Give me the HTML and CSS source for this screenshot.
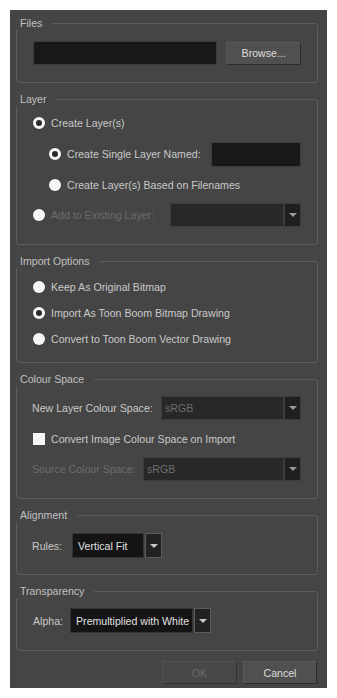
FILE: index.html
```html
<!DOCTYPE html>
<html>
<head>
<meta charset="utf-8">
<link rel="stylesheet" href="styles.css">
</head>
<body>
<div class="dialog">
  <div class="group g-files">
    <span class="gtitle">Files</span>
    <div class="row">
      <div class="field f-path"></div>
      <div class="btn b-browse">Browse...</div>
    </div>
  </div>

  <div class="group g-layer">
    <span class="gtitle">Layer</span>
    <div class="opt r1"><span class="radio on"></span><span>Create Layer(s)</span></div>
    <div class="opt r2 sub"><span class="radio on"></span><span>Create Single Layer Named:</span><div class="field f-name"></div></div>
    <div class="opt r3 sub"><span class="radio"></span><span>Create Layer(s) Based on Filenames</span></div>
    <div class="opt r4"><span class="radio"></span><span class="dis">Add to Existing Layer:</span>
      <div class="combo dcombo c-exist"><span class="ctext"></span><span class="cbtn"><i class="arrow"></i></span></div>
    </div>
  </div>

  <div class="group g-import">
    <span class="gtitle">Import Options</span>
    <div class="opt"><span class="radio"></span><span>Keep As Original Bitmap</span></div>
    <div class="opt"><span class="radio on"></span><span>Import As Toon Boom Bitmap Drawing</span></div>
    <div class="opt"><span class="radio"></span><span>Convert to Toon Boom Vector Drawing</span></div>
  </div>

  <div class="group g-colour">
    <span class="gtitle">Colour Space</span>
    <div class="opt c1"><span class="lbl">New Layer Colour Space:</span>
      <div class="combo dcombo c-new"><span class="ctext">sRGB</span><span class="cbtn"><i class="arrow"></i></span></div>
    </div>
    <div class="opt c2"><span class="check"></span><span>Convert Image Colour Space on Import</span></div>
    <div class="opt c3"><span class="lbl dis">Source Colour Space:</span>
      <div class="combo dcombo c-src"><span class="ctext">sRGB</span><span class="cbtn"><i class="arrow"></i></span></div>
    </div>
  </div>

  <div class="group g-align">
    <span class="gtitle">Alignment</span>
    <div class="opt"><span class="lbl">Rules:</span>
      <div class="combo ecombo c-rules"><span class="ctext">Vertical Fit</span><span class="cbtn"><i class="arrow"></i></span></div>
    </div>
  </div>

  <div class="group g-trans">
    <span class="gtitle">Transparency</span>
    <div class="opt"><span class="lbl">Alpha:</span>
      <div class="combo ecombo c-alpha"><span class="ctext">Premultiplied with White</span><span class="cbtn"><i class="arrow"></i></span></div>
    </div>
  </div>

  <div class="actions">
    <div class="btn b-ok disabled">OK</div>
    <div class="btn b-cancel">Cancel</div>
  </div>
</div>
</body>
</html>
```

FILE: styles.css
```css
html, body {
  margin: 0;
  padding: 0;
  background: #ffffff;
}
body {
  font-family: "Liberation Sans", Arial, sans-serif;
  font-size: 10.6px;
  color: #c9c9c9;
}
.dialog {
  margin: 10px 0 0 10px;
  width: 317px;
  height: 678px;
  box-sizing: border-box;
  background: #454545;
  padding: 13px 9px 0 6px;
  display: flex;
  flex-direction: column;
}
.group {
  position: relative;
  border: 1px solid #5c5c5c;
  border-radius: 3px;
  padding: 0 16px;
  display: flex;
  flex-direction: column;
  margin-bottom: 16px;
  flex: none;
}
.gtitle {
  position: absolute;
  left: -1px;
  top: -8px;
  height: 14px;
  line-height: 14px;
  padding: 0 10px 0 4px;
  background: #454545;
  color: #c0c0c0;
}
.row {
  display: flex;
  align-items: center;
}
.g-files { padding-top: 17px; padding-bottom: 17px; }
.f-path { width: 185px; height: 24px; }
.b-browse { margin-left: 9px; width: 75px; height: 23px; }

.field {
  box-sizing: border-box;
  background: #181818;
  border: 1px solid #3c3c3c;
}
.btn {
  box-sizing: border-box;
  background: #505050;
  border: 1px solid #2c2c2c;
  border-top-color: #5a5a5a;
  border-left-color: #5a5a5a;
  color: #dedede;
  display: flex;
  align-items: center;
  justify-content: center;
}
.btn.disabled {
  background: #484848;
  color: #6c6c6c;
  border-color: #333333;
  border-top-color: #525252;
  border-left-color: #525252;
}

.opt {
  display: flex;
  align-items: center;
  height: 20px;
  flex: none;
}
.opt > span:not(.radio):not(.check):not(.lbl) { white-space: nowrap; }
.radio {
  width: 12px;
  height: 12px;
  border-radius: 50%;
  background: #f6f6f6;
  margin-right: 6px;
  flex: none;
  box-sizing: border-box;
}
.radio.on {
  border: 3px solid #f6f6f6;
  background: #2a2a2a;
}
.check {
  width: 12px;
  height: 12px;
  background: #f6f6f6;
  margin-right: 6px;
  flex: none;
}
.dis { color: #6c6c6c; }
.lbl { white-space: nowrap; }
.sub { margin-left: 16px; }

.g-layer { padding-top: 13px; padding-bottom: 17px; }
.g-layer .r2 { margin-top: 9px; height: 24px; }
.g-layer .r3 { margin-top: 9px; }
.g-layer .r4 { margin-top: 8px; height: 24px; }
.f-name { margin-left: auto; width: 90px; height: 25px; }

.combo {
  box-sizing: border-box;
  height: 24px;
  display: flex;
  margin-left: auto;
}
.ctext {
  flex: 1;
  display: flex;
  align-items: center;
  white-space: nowrap;
}
.cbtn {
  width: 15px;
  display: flex;
  align-items: center;
  justify-content: center;
}
.arrow {
  width: 0;
  height: 0;
  border-left: 4px solid transparent;
  border-right: 4px solid transparent;
  border-top: 4px solid #9a9a9a;
}
.dcombo {
  background: #282828;
  border: 1px solid #3c3c3c;
  color: #6e6e6e;
}
.dcombo .ctext { padding-left: 3px; }
.dcombo .cbtn { background: #1f1f1f; border-left: 2px solid #3c3c3c; }
.ecombo {
  margin-left: 0;
  color: #e0e0e0;
}
.ecombo .ctext {
  background: #141414;
  border: 1px solid #333333;
  padding-left: 5px;
}
.ecombo .cbtn {
  background: #222222;
  border: 1px solid #5a5a5a;
  margin-left: 1px;
}
.ecombo .arrow { border-top-color: #c8c8c8; }
.c-exist { width: 131px; }

.g-import { padding-top: 15px; padding-bottom: 13px; }
.g-import .opt + .opt { margin-top: 6px; }

.g-colour { padding-top: 16px; padding-bottom: 17px; }
.g-colour .c1 { height: 24px; }
.g-colour .c2 { margin-top: 9px; }
.g-colour .c3 { margin-top: 8px; height: 24px; }
.g-colour .lbl { margin-left: -1px; }
.c-new { width: 140px; }
.c-src { width: 158px; }

.g-align { padding-top: 17px; padding-bottom: 16px; }
.g-align .opt { height: 25px; }
.g-align .lbl { margin-left: -1px; margin-right: 10px; }
.c-rules { width: 90px; height: 25px; }

.g-trans { padding-top: 16px; padding-bottom: 17px; margin-bottom: 10px; }
.g-trans .opt { height: 25px; }
.g-trans .lbl { margin-right: 7px; }
.c-alpha { width: 141px; height: 25px; }

.actions {
  display: flex;
  justify-content: flex-end;
  gap: 6px;
  margin-right: 1px;
  flex: none;
}
.b-ok { width: 75px; height: 23px; }
.b-cancel { width: 74px; height: 23px; }
```
